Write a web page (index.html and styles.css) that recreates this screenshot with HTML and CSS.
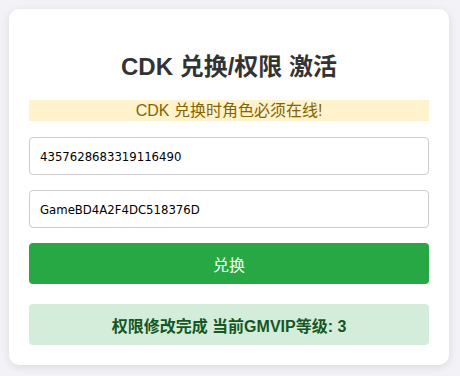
FILE: index.html
```html
<!DOCTYPE html>
<html lang="zh">
<head>
<meta charset="utf-8">
<title>CDK 兑换</title>
<link rel="stylesheet" href="styles.css">
</head>
<body>
<div class="card">
  <h2 class="title">CDK 兑换/权限 激活</h2>
  <div class="warning">CDK 兑换时角色必须在线!</div>
  <input class="field" type="text" value="4357628683319116490">
  <input class="field" type="text" value="GameBD4A2F4DC518376D">
  <button class="btn">兑换</button>
  <div class="result">权限修改完成 当前GMVIP等级: 3</div>
</div>
</body>
</html>
```

FILE: styles.css
```css
html, body {
  margin: 0;
  padding: 0;
}
body {
  background: #f3f3f7;
  padding: 9px;
  font-family: "Liberation Sans", "Noto Sans CJK SC", sans-serif;
}
.card {
  width: 440px;
  box-sizing: border-box;
  background: #fff;
  border-radius: 10px;
  padding: 20px;
  box-shadow: 0 2px 10px rgba(0, 0, 0, 0.1);
  display: flex;
  flex-direction: column;
}
.title {
  margin: 24px 0 19px;
  font-size: 24px;
  line-height: 28px;
  font-weight: bold;
  color: #333;
  text-align: center;
}
.warning {
  background: #fff3cd;
  color: #856404;
  font-size: 16px;
  line-height: 21px;
  text-align: center;
  margin-bottom: 16px;
}
.field {
  height: 38px;
  box-sizing: border-box;
  border: 1px solid #ccc;
  border-radius: 4px;
  padding: 0 10px;
  font-family: "DejaVu Sans Condensed", "DejaVu Sans", sans-serif;
  font-size: 13px;
  color: #000;
  margin: 0 0 15px;
  outline: none;
}
.btn {
  height: 41px;
  border: none;
  border-radius: 4px;
  background: #28a745;
  color: #fff;
  font-family: "Liberation Sans", "Noto Sans CJK SC", sans-serif;
  font-size: 16px;
  margin: 0 0 20px;
  padding: 0;
}
.result {
  height: 41px;
  box-sizing: border-box;
  background: #d4edda;
  color: #155724;
  border-radius: 4px;
  font-size: 16px;
  font-weight: bold;
  display: flex;
  align-items: center;
  justify-content: center;
}
```
